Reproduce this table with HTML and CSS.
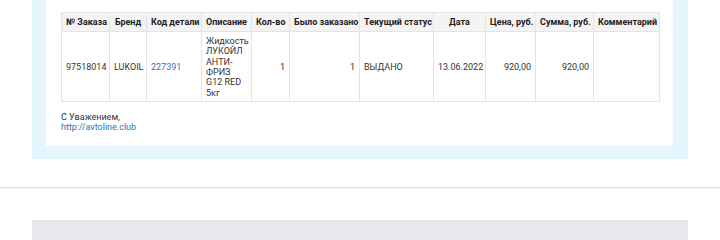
FILE: index.html
```html
<!DOCTYPE html>
<html lang="ru">
<head>
<meta charset="utf-8">
<link rel="stylesheet" href="styles.css">
</head>
<body>
<div class="frame">
  <div class="card">
    <table class="orders">
      <colgroup>
        <col class="c1"><col class="c2"><col class="c3"><col class="c4"><col class="c5"><col class="c6"><col class="c7"><col class="c8"><col class="c9"><col class="c10"><col class="c11">
      </colgroup>
      <thead>
        <tr>
          <th>№ Заказа</th><th>Бренд</th><th>Код детали</th><th>Описание</th><th>Кол-во</th><th>Было заказано</th><th>Текущий статус</th><th>Дата</th><th>Цена, руб.</th><th>Сумма, руб.</th><th>Комментарий</th>
        </tr>
      </thead>
      <tbody>
        <tr>
          <td>97518014</td>
          <td>LUKOIL</td>
          <td><a href="#" class="link">227391</a></td>
          <td class="desc">Жидкость ЛУКОЙЛ АНТИ-ФРИЗ G12 RED 5кг</td>
          <td class="num">1</td>
          <td class="num">1</td>
          <td>ВЫДАНО</td>
          <td class="center">13.06.2022</td>
          <td class="num">920,00</td>
          <td class="num">920,00</td>
          <td></td>
        </tr>
      </tbody>
    </table>
    <p class="sign">С Уважением,<br><a href="#" class="link">http://avtoline.club</a></p>
  </div>
</div>
<div class="divider"></div>
<div class="grey"></div>
</body>
</html>
```
FILE: styles.css
```css
html, body {
  margin: 0;
  padding: 0;
  background: #ffffff;
  font-family: Roboto, "Liberation Sans", sans-serif;
  color: #333333;
}
.frame {
  margin: 0 32px;
  background: #e3f6fd;
  padding: 0 15px 13px 14px;
}
.card {
  background: #ffffff;
  padding: 12px 14px 14px 15px;
}
.orders {
  border-collapse: collapse;
  table-layout: fixed;
  width: 598px;
  font-size: 9px;
  line-height: 10.4px;
}
.c1 { width: 48px; } .c2 { width: 37px; } .c3 { width: 55px; } .c4 { width: 50px; }
.c5 { width: 38px; } .c6 { width: 70px; } .c7 { width: 74px; } .c8 { width: 52px; }
.c9 { width: 50px; } .c10 { width: 58px; } .c11 { width: 66px; }
.orders th, .orders td {
  border: 1px solid #e4e4e4;
  padding: 4px 4px;
  text-align: left;
  vertical-align: middle;
  overflow: hidden;
}
.orders th {
  background: #f4f4f4;
  font-weight: 700;
  white-space: nowrap;
  height: 10px;
  padding: 4px 4px;
  text-align: center;
  color: #222;
}
.orders td { height: 61px; }
.orders td.num { text-align: right; }
.orders td.center { text-align: center; }
.orders td.desc { padding: 3px 4px; }
.link { color: #2e74b5; text-decoration: none; }
.sign {
  margin: 10px 0 0 0;
  font-size: 9px;
  line-height: 10px;
}
.divider {
  margin-top: 28px;
  height: 1px;
  background: #e2e2e2;
  box-shadow: 0 1px 1px rgba(0,0,0,0.04);
}
.grey {
  margin: 32px 32px 0;
  height: 40px;
  background: #e7e8eb;
}
```
